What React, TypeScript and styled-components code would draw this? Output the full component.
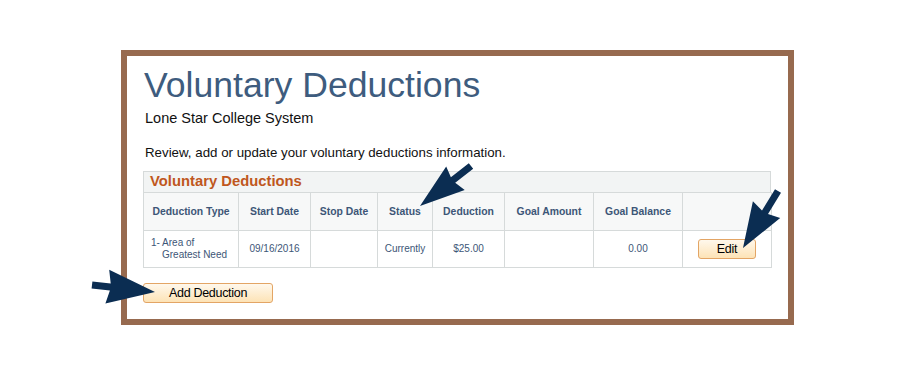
import React from 'react';
import styled, { createGlobalStyle } from 'styled-components';

const GlobalStyle = createGlobalStyle`
  html, body {
    margin: 0;
    padding: 0;
    background: #ffffff;
  }
  body {
    font-family: "Liberation Sans", Arial, sans-serif;
  }
`;

const Stage = styled.div`
  position: relative;
  width: 900px;
  height: 375px;
  padding: 50px 0 0 121px;
  box-sizing: border-box;
  overflow: hidden;
`;

const Frame = styled.div`
  width: 673px;
  height: 275px;
  box-sizing: border-box;
  border: 6px solid #976a4f;
  padding: 10px 16px 0 16px;
`;

const Title = styled.h1`
  margin: 0;
  font-size: 35.6px;
  line-height: 39px;
  font-weight: normal;
  color: #3e5c7e;
  padding-left: 1px;
`;

const Subtitle = styled.div`
  margin-top: 5px;
  font-size: 14.5px;
  line-height: 16px;
  color: #111;
  padding-left: 2px;
`;

const Intro = styled.p`
  margin: 19px 0 0 0;
  font-size: 13.3px;
  line-height: 16px;
  color: #111;
  padding-left: 2px;
`;

const Panel = styled.div`
  margin-top: 10px;
  width: 628px;
  box-sizing: border-box;
`;

const PanelHead = styled.div`
  height: 21px;
  box-sizing: border-box;
  border: 1px solid #d6dada;
  border-bottom: none;
  background: #f2f4f4;
  color: #bf571d;
  font-weight: bold;
  font-size: 14.8px;
  line-height: 19px;
  padding-left: 6px;
`;

const Table = styled.table`
  width: 628px;
  table-layout: fixed;
  border-collapse: collapse;
  font-size: 10px;
  color: #3d5677;
`;

const HeadCell = styled.th`
  height: 37px;
  border: 1px solid #d6dada;
  background: #f7f8f8;
  font-weight: bold;
  font-size: 10.4px;
  color: #3d5677;
  text-align: center;
  padding: 0;
`;

const Cell = styled.td<{ $left?: boolean }>`
  height: 36px;
  border: 1px solid #d6dada;
  background: #fff;
  text-align: ${(p) => (p.$left ? 'left' : 'center')};
  padding: ${(p) => (p.$left ? '0 0 0 7px' : '0')};
  line-height: 12.5px;
  vertical-align: middle;
`;

const Indent = styled.span`
  display: block;
  padding-left: 11px;
`;

const Button = styled.button<{ $width: number }>`
  width: ${(p) => p.$width}px;
  height: 20px;
  box-sizing: border-box;
  border: 1px solid #e3a565;
  border-radius: 3px;
  background: linear-gradient(#fff8ec, #fde3b6);
  font-family: "Liberation Sans", Arial, sans-serif;
  font-size: 12.5px;
  letter-spacing: -0.3px;
  color: #000;
  padding: 0;
  line-height: 18px;
  cursor: pointer;
`;

const Actions = styled.div`
  margin-top: 15px;
`;

const Overlay = styled.svg`
  position: absolute;
  left: 0;
  top: 0;
  pointer-events: none;
`;

type Pt = [number, number];

const arrowPoints = (tail: Pt, tip: Pt, h: number, w: number, s: number) => {
  const dx = tip[0] - tail[0];
  const dy = tip[1] - tail[1];
  const len = Math.hypot(dx, dy);
  const ux = dx / len;
  const uy = dy / len;
  const nx = -uy;
  const ny = ux;
  const bx = tip[0] - ux * h;
  const by = tip[1] - uy * h;
  const pts: Pt[] = [
    [tail[0] + nx * s, tail[1] + ny * s],
    [bx + nx * s, by + ny * s],
    [bx + nx * w - ux * 3, by + ny * w - uy * 3],
    tip,
    [bx - nx * w - ux * 3, by - ny * w - uy * 3],
    [bx - nx * s, by - ny * s],
    [tail[0] - nx * s, tail[1] - ny * s],
  ];
  return pts.map((p) => `${p[0].toFixed(1)},${p[1].toFixed(1)}`).join(' ');
};

const arrows: { tail: Pt; tip: Pt; h: number; w: number }[] = [
  { tail: [471, 166], tip: [420, 206], h: 42, w: 15 },
  { tail: [778, 191], tip: [743, 248], h: 42, w: 16 },
  { tail: [92, 285], tip: [155, 292], h: 45, w: 17 },
];

const columns = [
  { label: 'Deduction Type', width: 95 },
  { label: 'Start Date', width: 72 },
  { label: 'Stop Date', width: 67 },
  { label: 'Status', width: 55 },
  { label: 'Deduction', width: 72 },
  { label: 'Goal Amount', width: 89 },
  { label: 'Goal Balance', width: 89 },
  { label: '', width: 89 },
];

const App: React.FC = () => {
  return (
    <>
      <GlobalStyle />
      <Stage>
        <Frame>
          <Title>Voluntary Deductions</Title>
          <Subtitle>Lone Star College System</Subtitle>
          <Intro>Review, add or update your voluntary deductions information.</Intro>
          <Panel>
            <PanelHead>Voluntary Deductions</PanelHead>
            <Table>
              <colgroup>
                {columns.map((c, i) => (
                  <col key={i} style={{ width: c.width }} />
                ))}
              </colgroup>
              <thead>
                <tr>
                  {columns.map((c, i) => (
                    <HeadCell key={i}>{c.label}</HeadCell>
                  ))}
                </tr>
              </thead>
              <tbody>
                <tr>
                  <Cell $left>
                    1- Area of
                    <Indent>Greatest Need</Indent>
                  </Cell>
                  <Cell>09/16/2016</Cell>
                  <Cell />
                  <Cell>Currently</Cell>
                  <Cell>$25.00</Cell>
                  <Cell />
                  <Cell>0.00</Cell>
                  <Cell>
                    <Button $width={58}>Edit</Button>
                  </Cell>
                </tr>
              </tbody>
            </Table>
          </Panel>
          <Actions>
            <Button $width={130}>Add Deduction</Button>
          </Actions>
        </Frame>
        <Overlay width={900} height={375} viewBox="0 0 900 375">
          {arrows.map((a, i) => (
            <polygon key={i} points={arrowPoints(a.tail, a.tip, a.h, a.w, 3.5)} fill="#0b2d52" />
          ))}
        </Overlay>
      </Stage>
    </>
  );
};

export default App;
